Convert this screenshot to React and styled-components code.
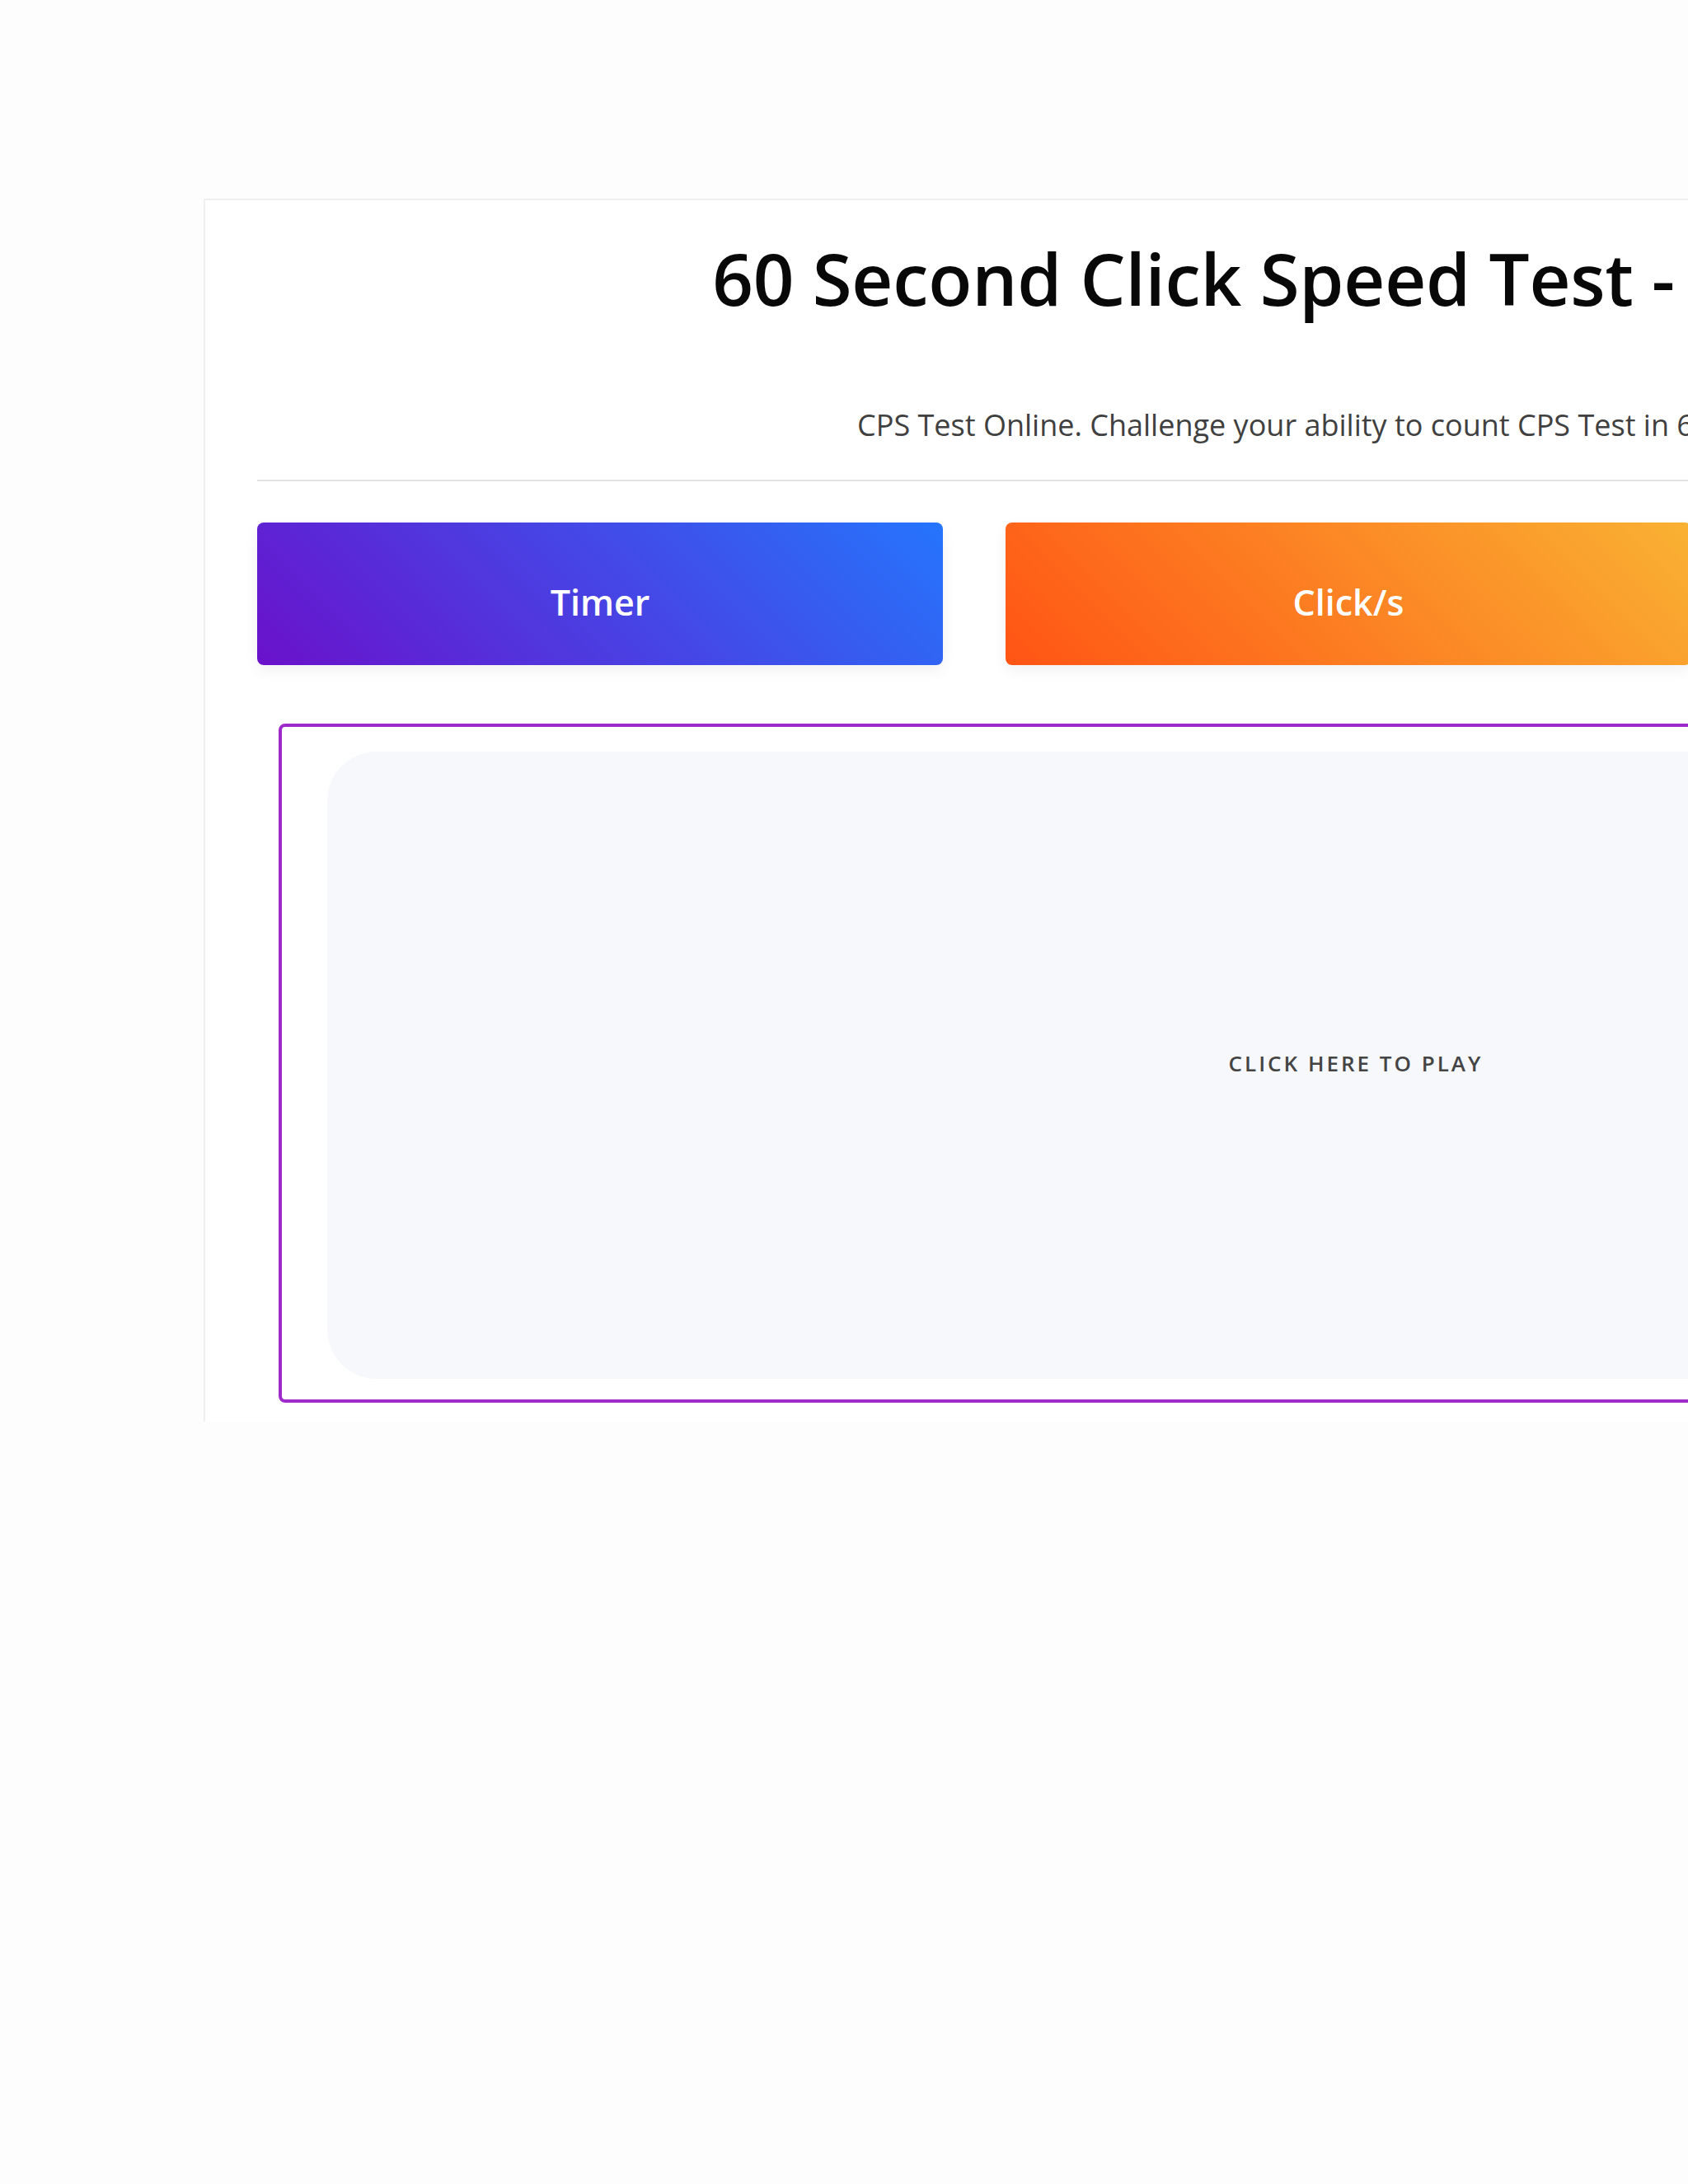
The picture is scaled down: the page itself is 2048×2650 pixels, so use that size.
import React from "react";
import styled, { createGlobalStyle } from "styled-components";

const Global = createGlobalStyle`
  html, body {
    margin: 0;
    padding: 0;
    background: #fdfdfd;
    font-family: "Open Sans", "Noto Sans", "Liberation Sans", sans-serif;
    overflow: hidden;
  }
  * { box-sizing: border-box; }
`;

const Viewport = styled.div`
  width: 2048px;
  min-height: 2650px;
  overflow: hidden;
  padding: 241px 0 0 247px;
`;

const Card = styled.section`
  width: 2778px;
  background: #ffffff;
  border: 2px solid #efefef;
  border-bottom: none;
  padding: 0 63px 23px;
  display: flex;
  flex-direction: column;
`;

const Title = styled.h1`
  margin: 42px 0 0;
  font-size: 87px;
  line-height: 1.2;
  font-weight: 600;
  letter-spacing: -0.2px;
  color: #080808;
  text-align: center;
`;

const Subtitle = styled.p`
  margin: 100px 0 0;
  font-size: 36px;
  line-height: 1.5;
  font-weight: 400;
  color: #404040;
  text-align: center;
`;

const Divider = styled.hr`
  margin: 39px 0 0;
  border: none;
  height: 2px;
  background: #e2e2e2;
`;

const StatRow = styled.div`
  margin-top: 50px;
  display: grid;
  grid-template-columns: repeat(3, 1fr);
  gap: 76px;
`;

const gradients = {
  purple: "linear-gradient(45deg, #6a11cb 0%, #2575fc 100%)",
  orange: "linear-gradient(45deg, #ff5414 0%, #f9b233 100%)",
  green: "linear-gradient(45deg, #11998e 0%, #38ef7d 100%)",
};

const StatButton = styled.button`
  height: 173px;
  border: none;
  border-radius: 8px;
  background: ${(p) => gradients[p.$variant]};
  box-shadow: 0 6px 18px rgba(0, 0, 0, 0.06);
  color: #ffffff;
  font-family: inherit;
  font-size: 43px;
  font-weight: 600;
  display: flex;
  align-items: center;
  justify-content: center;
  padding: 20px 0 0;
  cursor: pointer;
`;

const PlayFrame = styled.div`
  margin: 71px 26px 0;
  border: 4px solid #9e2acb;
  border-radius: 8px;
  padding: 30px 55px 25px;
`;

const PlayArea = styled.div`
  height: 761px;
  background: #f7f8fb;
  border-radius: 60px;
  display: flex;
  align-items: center;
  justify-content: center;
  padding: 0 0 6px 18px;
  font-size: 26px;
  font-weight: 600;
  letter-spacing: 3px;
  color: #444444;
  text-transform: uppercase;
  cursor: pointer;
  user-select: none;
`;

export default function App() {
  return (
    <>
      <Global />
      <Viewport>
        <Card>
          <Title>60 Second Click Speed Test - CPS Test</Title>
          <Subtitle>
            CPS Test Online. Challenge your ability to count CPS Test in 60 seconds.
          </Subtitle>
          <Divider />
          <StatRow>
            <StatButton $variant="purple">Timer</StatButton>
            <StatButton $variant="orange">Click/s</StatButton>
            <StatButton $variant="green">Score</StatButton>
          </StatRow>
          <PlayFrame>
            <PlayArea>Click here to play</PlayArea>
          </PlayFrame>
        </Card>
      </Viewport>
    </>
  );
}
